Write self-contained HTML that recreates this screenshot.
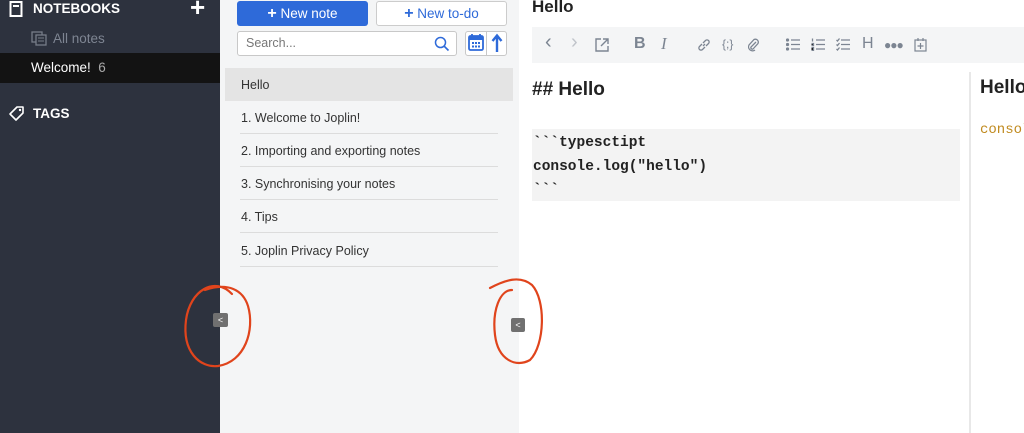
<!DOCTYPE html>
<html><head><meta charset="utf-8"><style>
*{box-sizing:border-box;margin:0;padding:0}
body{width:1024px;height:433px;overflow:hidden;position:relative;font-family:"Liberation Sans",sans-serif;background:#fff}
.abs{position:absolute}
#side{left:0;top:0;width:220px;height:433px;background:#2d323e;color:#fff}
#list{left:220px;top:0;width:299px;height:433px;background:#f4f5f6}
.note{position:absolute;left:20px;width:258px;font-size:12.5px;color:#333;border-bottom:1px solid #dcdcdc;height:33px;line-height:34px;padding-left:1px}
.tb{color:#7c8592;font-size:15px;position:absolute;top:34px}
.mono{font-family:"Liberation Mono",monospace;font-weight:bold;font-size:14.5px;color:#222}
</style></head><body>
<div id="side" class="abs">
  <svg class="abs" style="left:9px;top:1px" width="14" height="16" viewBox="0 0 14 16"><rect x="1.5" y="1" width="11" height="14" fill="none" stroke="#fff" stroke-width="2"/><rect x="4" y="4" width="6" height="2" fill="#fff"/></svg>
  <div class="abs" style="left:33px;top:1px;font-size:13.5px;font-weight:bold">NOTEBOOKS</div>
  <div class="abs" style="left:190px;top:-8px;font-size:26px;font-weight:bold">+</div>
  <svg class="abs" style="left:31px;top:31px" width="16" height="15" viewBox="0 0 16 15"><rect x="1" y="1" width="10" height="10" fill="none" stroke="#777d88" stroke-width="1.3"/><rect x="5" y="4" width="10" height="10" fill="#2d323e" stroke="#777d88" stroke-width="1.3"/><path d="M7 7h6M7 10h6" stroke="#777d88"/></svg>
  <div class="abs" style="left:53px;top:31px;font-size:13.5px;color:#7e8592">All notes</div>
  <div class="abs" style="left:0;top:53px;width:220px;height:30px;background:#131313"></div>
  <div class="abs" style="left:31px;top:60px;font-size:13.5px">Welcome!&nbsp; <span style="color:#aaa">6</span></div>
  <svg class="abs" style="left:8px;top:105px" width="17" height="17" viewBox="0 0 17 17"><path d="M2 9 L9 2 L15 2 L15 8 L8 15 Z" fill="none" stroke="#fff" stroke-width="1.6" stroke-linejoin="round"/><circle cx="12" cy="5" r="1.2" fill="#fff"/></svg>
  <div class="abs" style="left:33px;top:106px;font-size:13.5px;font-weight:bold">TAGS</div>
</div>

<div id="list" class="abs">
  <div class="abs" style="left:17px;top:1px;width:131px;height:25px;background:#2e6ad9;border-radius:3px;color:#fff;font-size:13.5px;text-align:center;line-height:25px"><b style="font-size:16px">+</b> New note</div>
  <div class="abs" style="left:156px;top:1px;width:131px;height:25px;background:#fff;border:1px solid #ccc;border-radius:3px;color:#2e6ad9;font-size:13.5px;text-align:center;line-height:23px"><b style="font-size:16px">+</b> New to-do</div>
  <div class="abs" style="left:17px;top:31px;width:220px;height:25px;background:#fff;border:1px solid #c8c8c8;border-radius:3px;color:#777;font-size:12.5px;line-height:23px;padding-left:8px">Search...</div>
  <svg class="abs" style="left:214px;top:36px" width="16" height="16" viewBox="0 0 16 16"><circle cx="6.5" cy="6.5" r="5" fill="none" stroke="#2e6ad9" stroke-width="1.5"/><path d="M10 10l4.5 4.5" stroke="#2e6ad9" stroke-width="1.6"/></svg>
  <div class="abs" style="left:245px;top:31px;width:42px;height:25px;background:#fff;border:1px solid #c8c8c8;border-radius:3px"></div>
  <div class="abs" style="left:266px;top:31px;width:1px;height:25px;background:#c8c8c8"></div>
  <svg class="abs" style="left:248px;top:33px" width="16" height="18" viewBox="0 0 16 18"><rect x="1" y="3" width="14" height="14" rx="1.5" fill="none" stroke="#2e6ad9" stroke-width="1.8"/><rect x="1" y="3" width="14" height="4" fill="#2e6ad9"/><path d="M4 1v4M12 1v4" stroke="#2e6ad9" stroke-width="1.8"/><g fill="#2e6ad9"><rect x="4" y="9" width="2" height="2"/><rect x="7" y="9" width="2" height="2"/><rect x="10" y="9" width="2" height="2"/><rect x="4" y="12.5" width="2" height="2"/><rect x="7" y="12.5" width="2" height="2"/><rect x="10" y="12.5" width="2" height="2"/></g></svg>
  <svg class="abs" style="left:271px;top:33px" width="12" height="20" viewBox="0 0 12 20"><path d="M6 19V3M1.5 8L6 2.5 10.5 8" fill="none" stroke="#2e6ad9" stroke-width="2.4"/></svg>
  <div class="abs" style="left:5px;top:68px;width:288px;height:33px;background:#e4e4e4"></div>
  <div class="abs" style="left:21px;top:78px;font-size:12.5px;color:#333">Hello</div>
  <div class="note" style="top:101px">1. Welcome to Joplin!</div>
  <div class="note" style="top:134px">2. Importing and exporting notes</div>
  <div class="note" style="top:167px">3. Synchronising your notes</div>
  <div class="note" style="top:200px">4. Tips</div>
  <div class="note" style="top:234px">5. Joplin Privacy Policy</div>
</div>
<div class="abs" style="left:213px;top:313px;width:15px;height:14px;background:#707070;border-radius:2px;color:#fff;font-size:9px;text-align:center;line-height:14px">&lt;</div>
<div class="abs" style="left:511px;top:318px;width:14px;height:14px;background:#707070;border-radius:2px;color:#fff;font-size:9px;text-align:center;line-height:14px">&lt;</div>

<div class="abs" style="left:532px;top:-3px;font-size:17px;font-weight:bold;color:#222">Hello</div>
<div class="abs" style="left:532px;top:27px;width:492px;height:36px;background:#f4f5f6"></div>
<div class="tb" style="left:545px;font-size:20px;top:31px">&#x2039;</div>
<div class="tb" style="left:571px;color:#c0c4ca;font-size:20px;top:31px">&#x203A;</div>
<svg class="abs" style="left:595px;top:38px" width="14" height="14" viewBox="0 0 14 14" fill="none" stroke="#7c8592" stroke-width="1.4"><path d="M6 1H1v12h12V8M8 1h5v5M13 1L6 8"/></svg>
<div class="tb" style="left:634px;font-weight:bold;font-size:16px;top:35px">B</div>
<div class="tb" style="left:661px;font-family:'Liberation Serif',serif;font-style:italic;font-size:17px;top:34px">I</div>
<svg class="abs" style="left:697px;top:38px" width="14" height="14" viewBox="0 0 14 14" fill="none" stroke="#7c8592" stroke-width="1.3"><path d="M6 8L8 6M5 6L2.5 8.5a2 2 0 003 3L8 9M9 8l2.5-2.5a2 2 0 00-3-3L6 5"/></svg>
<div class="tb" style="left:722px;font-size:12px;top:37px">{;}</div>
<svg class="abs" style="left:746px;top:37px" width="14" height="15" viewBox="0 0 14 15" fill="none" stroke="#7c8592" stroke-width="1.3"><path d="M10 5L5 10a1.5 1.5 0 002 2l5-5.5a3 3 0 00-4-4L3 8a4 4 0 006 5"/></svg>
<svg class="abs" style="left:786px;top:38px" width="14" height="13" viewBox="0 0 14 13" stroke="#7c8592" stroke-width="1.3"><path d="M5 2h9M5 6.5h9M5 11h9"/><circle cx="1.5" cy="2" r="1" fill="#7c8592"/><circle cx="1.5" cy="6.5" r="1" fill="#7c8592"/><circle cx="1.5" cy="11" r="1" fill="#7c8592"/></svg>
<svg class="abs" style="left:811px;top:38px" width="14" height="13" viewBox="0 0 14 13" stroke="#7c8592" stroke-width="1.3"><path d="M5 2h9M5 6.5h9M5 11h9M1.5 0.5v3M0.5 5.5h2v2h-2M0.5 9.5h2v3h-2"/></svg>
<svg class="abs" style="left:836px;top:38px" width="14" height="13" viewBox="0 0 14 13" fill="none" stroke="#7c8592" stroke-width="1.3"><path d="M5 2h9M5 6.5h9M5 11h9M0.5 2l1 1 2-2.5M0.5 6.5l1 1 2-2.5M0.5 11l1 1 2-2.5"/></svg>
<div class="tb" style="left:862px;font-size:16px;top:35px">H</div>
<div class="tb" style="left:884px;font-size:12px;top:38px;letter-spacing:-1px">&#x25CF;&#x25CF;&#x25CF;</div>
<svg class="abs" style="left:914px;top:38px" width="13" height="14" viewBox="0 0 13 14" fill="none" stroke="#7c8592" stroke-width="1.2"><rect x="1" y="2" width="11" height="11"/><path d="M4 0v3M9 0v3M6.5 5v6M3.5 8h6"/></svg>

<div class="abs" style="left:532px;top:79px;font-size:19px;font-weight:bold;color:#222">## Hello</div>
<div class="abs" style="left:532px;top:129px;width:428px;height:72px;background:#f3f3f3"></div>
<div class="abs mono" style="left:533px;top:135px">&#96;&#96;&#96;typesctipt</div>
<div class="abs mono" style="left:533px;top:159px">console.log("hello")</div>
<div class="abs mono" style="left:533px;top:182px">&#96;&#96;&#96;</div>
<div class="abs" style="left:969px;top:72px;width:2px;height:361px;background:#e8e8e8"></div>
<div class="abs" style="left:980px;top:77px;font-size:19px;font-weight:bold;color:#222">Hello</div>
<div class="abs" style="left:980px;top:122px;font-family:'Liberation Mono',monospace;font-size:14px;color:#c08a1e">console</div>

<svg class="abs" style="left:0;top:0" width="1024" height="433"><g fill="none" stroke="#e0441c" stroke-width="2.2" stroke-linecap="round">
<path d="M232 294 C215 276 190 290 186 320 C182 352 200 368 218 366 C245 362 255 330 248 306 C243 290 228 282 205 290"/>
<path d="M490 288 C505 280 520 275 532 285 C546 300 545 345 530 360 C516 368 498 360 495 335 C492 310 500 290 512 290"/>
</g></svg>
</body></html>
